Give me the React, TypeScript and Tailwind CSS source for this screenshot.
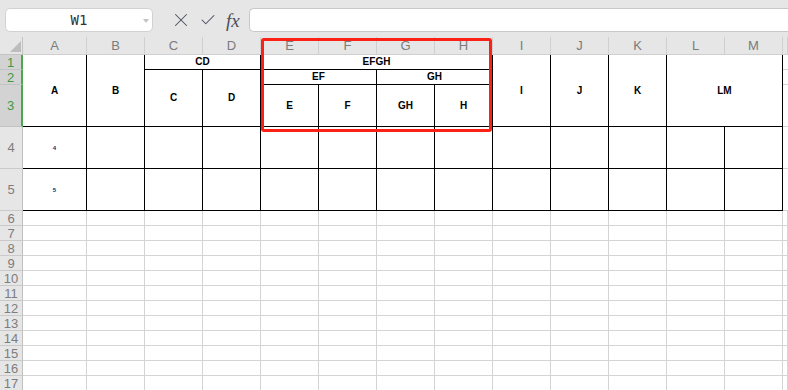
import { Check, X } from 'lucide-react';

const letters = ['A', 'B', 'C', 'D', 'E', 'F', 'G', 'H', 'I', 'J', 'K', 'L', 'M', ''];

// merged table cells, placed explicitly (grid row 1 is the column header)
const tableCells: { cls: string; text?: string; small?: boolean }[] = [
    { cls: 'col-start-2 row-start-2 row-span-3', text: 'A' },
    { cls: 'col-start-3 row-start-2 row-span-3', text: 'B' },
    { cls: 'col-start-4 col-span-2 row-start-2', text: 'CD' },
    { cls: 'col-start-4 row-start-3 row-span-2', text: 'C' },
    { cls: 'col-start-5 row-start-3 row-span-2', text: 'D' },
    { cls: 'col-start-6 col-span-4 row-start-2', text: 'EFGH' },
    { cls: 'col-start-6 col-span-2 row-start-3', text: 'EF' },
    { cls: 'col-start-8 col-span-2 row-start-3', text: 'GH' },
    { cls: 'col-start-6 row-start-4', text: 'E' },
    { cls: 'col-start-7 row-start-4', text: 'F' },
    { cls: 'col-start-8 row-start-4', text: 'GH' },
    { cls: 'col-start-9 row-start-4', text: 'H' },
    { cls: 'col-start-10 row-start-2 row-span-3', text: 'I' },
    { cls: 'col-start-11 row-start-2 row-span-3', text: 'J' },
    { cls: 'col-start-12 row-start-2 row-span-3', text: 'K' },
    { cls: 'col-start-13 col-span-2 row-start-2 row-span-3', text: 'LM' },
    // row 4
    { cls: 'col-start-2 row-start-5', text: '4', small: true },
    { cls: 'col-start-3 row-start-5' },
    { cls: 'col-start-4 row-start-5' },
    { cls: 'col-start-5 row-start-5' },
    { cls: 'col-start-6 row-start-5' },
    { cls: 'col-start-7 row-start-5' },
    { cls: 'col-start-8 row-start-5' },
    { cls: 'col-start-9 row-start-5' },
    { cls: 'col-start-10 row-start-5' },
    { cls: 'col-start-11 row-start-5' },
    { cls: 'col-start-12 row-start-5' },
    { cls: 'col-start-13 row-start-5' },
    { cls: 'col-start-14 row-start-5' },
    // row 5
    { cls: 'col-start-2 row-start-6', text: '5', small: true },
    { cls: 'col-start-3 row-start-6' },
    { cls: 'col-start-4 row-start-6' },
    { cls: 'col-start-5 row-start-6' },
    { cls: 'col-start-6 row-start-6' },
    { cls: 'col-start-7 row-start-6' },
    { cls: 'col-start-8 row-start-6' },
    { cls: 'col-start-9 row-start-6' },
    { cls: 'col-start-10 row-start-6' },
    { cls: 'col-start-11 row-start-6' },
    { cls: 'col-start-12 row-start-6' },
    { cls: 'col-start-13 row-start-6' },
    { cls: 'col-start-14 row-start-6' },
];

const rows = Array.from({ length: 17 }, (_, i) => i + 1);

export default function App() {
    return (
        <div className="h-[390px] w-[788px] overflow-hidden bg-[#e6e6e6] font-['Liberation_Sans',Arial,sans-serif]">
            {/* formula bar */}
            <div className="flex h-[37px] items-start pt-2">
                <div className="relative ml-[5px] flex h-[24px] w-[148px] items-center justify-center rounded-[5px] border border-[#d2d2d2] bg-white">
                    <span className="font-['DejaVu_Sans_Mono',monospace] text-[14px] text-[#333]">W1</span>
                    <span className="absolute right-[3px] top-[10px] h-0 w-0 border-x-[3px] border-t-[4px] border-x-transparent border-t-[#c4c4c4]"></span>
                </div>
                <div className="ml-[17px] flex h-[24px] items-center text-[#4b4f5c]">
                    <X size={22} strokeWidth={1.1} />
                    <Check size={18} strokeWidth={1.4} className="ml-[7px]" />
                    <span className="ml-[9px] font-['Liberation_Serif',serif] text-[19px] italic leading-none">fx</span>
                </div>
                <div className="ml-[9px] h-[24px] flex-1 rounded-l-[5px] border border-r-0 border-[#c8c8c8] bg-white"></div>
            </div>

            {/* sheet */}
            <div className="relative">
                <div className="grid grid-cols-[23px_64px_repeat(12,58px)_1fr] grid-rows-[18px_15px_15px_42px_42px_42px_repeat(12,15px)]">
                    {tableCells.map((c, i) => (
                        <div
                            key={'t' + i}
                            className={`${c.cls} flex items-center justify-center border-r border-b border-black bg-white`}
                        >
                            {c.text && (
                                <span
                                    className={
                                        c.small
                                            ? 'text-[6px] font-bold leading-none text-[#0a2a6a]'
                                            : 'text-[10px] font-bold leading-none text-black'
                                    }
                                >
                                    {c.text}
                                </span>
                            )}
                        </div>
                    ))}

                    {/* column header */}
                    <div className="flex items-end justify-end border-r border-b border-[#c4c4c4] bg-[#e6e6e6] pr-[1px] pb-[2px]">
                        <svg width="11" height="11" viewBox="0 0 11 11">
                            <path d="M11 0 L11 11 L0 11 Z" fill="#bdbdbd" />
                        </svg>
                    </div>
                    {letters.map((l, i) => (
                        <div
                            key={'h' + i}
                            className="flex items-center justify-center border-r border-b border-[#cfcfcf] bg-[#e6e6e6] text-[13px] leading-none text-[#7b7b7b]"
                        >
                            {l}
                        </div>
                    ))}

                    {/* body rows */}
                    {rows.map((r) => (
                        <Row key={r} n={r} />
                    ))}
                </div>

                {/* red annotation box */}
                <div className="pointer-events-none absolute left-[261px] top-[1px] h-[94px] w-[231px] rounded-[3px] border-[3px] border-[#fb2117]"></div>
            </div>
        </div>
    );
}

function Row({ n }: { n: number }) {
    const selected = n <= 3;
    const inTable = n <= 5;
    return (
        <>
            <div
                className={
                    selected
                        ? 'flex items-center justify-center border-r-2 border-b border-r-[#4aa84f] border-b-[#c3c3c3] bg-[#d3d3d3] text-[13px] leading-none text-[#3b9a43]'
                        : 'flex items-center justify-center border-r border-b border-r-[#c0c0c0] border-b-[#cacaca] bg-[#e6e6e6] text-[13px] leading-none text-[#7d7d7d]'
                }
            >
                {n}
            </div>
            {inTable ? (
                <div className="border-b border-[#d4d4d4] bg-white"></div>
            ) : (
                Array.from({ length: 14 }, (_, i) => (
                    <div key={i} className="border-r border-b border-[#d4d4d4] bg-white"></div>
                ))
            )}
        </>
    );
}
